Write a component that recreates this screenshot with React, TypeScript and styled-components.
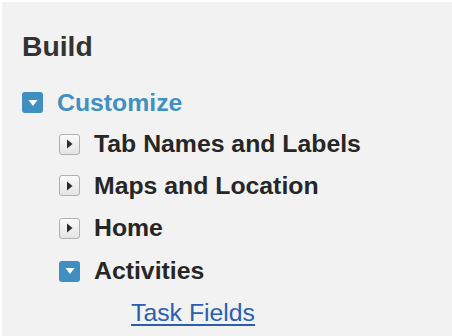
import React from 'react';
import styled, { createGlobalStyle } from 'styled-components';

const GlobalStyle = createGlobalStyle`
  html, body {
    margin: 0;
    padding: 0;
    background: #ffffff;
  }
  body {
    font-family: "Liberation Sans", Arial, sans-serif;
  }
`;

const Panel = styled.div`
  margin: 2px 0 0 2px;
  width: 450px;
  height: 334px;
  background: #f2f2f2;
  padding: 27px 0 0 20px;
  box-sizing: border-box;
  overflow: hidden;
`;

const Heading = styled.h2`
  margin: 0 0 19px;
  font-size: 28.3px;
  line-height: 34px;
  font-weight: bold;
  color: #333333;
`;

const Tree = styled.ul`
  list-style: none;
  margin: 0;
  padding: 0;
`;

// leaf rows have no toggle, so their text is pushed to where a label would sit
const Row = styled.li<{ $level: number; $height?: number; $leaf?: boolean }>`
  display: flex;
  align-items: center;
  gap: 14px;
  height: ${({ $height }) => $height ?? 42}px;
  padding-left: ${({ $level, $leaf }) => $level * 37 + ($leaf ? 35 : 0)}px;
  font-size: 24.8px;
`;

const Label = styled.span<{ $active?: boolean }>`
  font-weight: bold;
  color: ${({ $active }) => ($active ? '#4090c0' : '#262626')};
`;

const LeafLink = styled.a`
  color: #2a5fae;
  text-decoration: underline;
  text-underline-offset: 3px;
  text-decoration-thickness: 2px;
  cursor: pointer;
`;

const Toggle = styled.span<{ $open?: boolean }>`
  flex: none;
  display: flex;
  align-items: center;
  justify-content: center;
  width: 21px;
  height: 21px;
  box-sizing: border-box;
  border-radius: 3px;
  background: ${({ $open }) =>
    $open ? '#3f8fc0' : 'linear-gradient(#fbfbfb, #e4e4e4)'};
  border: ${({ $open }) => ($open ? 'none' : '1px solid #b0b0b0')};
`;

const Arrow = ({ open }: { open?: boolean }) =>
  open ? (
    <svg width="10" height="8" viewBox="0 0 10 8">
      <path d="M0.5 1 L9.5 1 L5 7 Z" fill="#ffffff" />
    </svg>
  ) : (
    <svg width="7" height="10" viewBox="0 0 7 10">
      <path d="M1 0.5 L6.5 5 L1 9.5 Z" fill="#2b2b2b" />
    </svg>
  );

const App: React.FC = () => (
  <>
    <GlobalStyle />
    <Panel>
      <Heading>Build</Heading>
      <Tree>
        <Row $level={0} $height={41}>
          <Toggle $open>
            <Arrow open />
          </Toggle>
          <Label $active>Customize</Label>
        </Row>
        <Row $level={1}>
          <Toggle>
            <Arrow />
          </Toggle>
          <Label>Tab Names and Labels</Label>
        </Row>
        <Row $level={1} $height={41}>
          <Toggle>
            <Arrow />
          </Toggle>
          <Label>Maps and Location</Label>
        </Row>
        <Row $level={1} $height={44}>
          <Toggle>
            <Arrow />
          </Toggle>
          <Label>Home</Label>
        </Row>
        <Row $level={1}>
          <Toggle $open>
            <Arrow open />
          </Toggle>
          <Label>Activities</Label>
        </Row>
        <Row $level={2} $leaf>
          <LeafLink>Task Fields</LeafLink>
        </Row>
      </Tree>
    </Panel>
  </>
);

export default App;
